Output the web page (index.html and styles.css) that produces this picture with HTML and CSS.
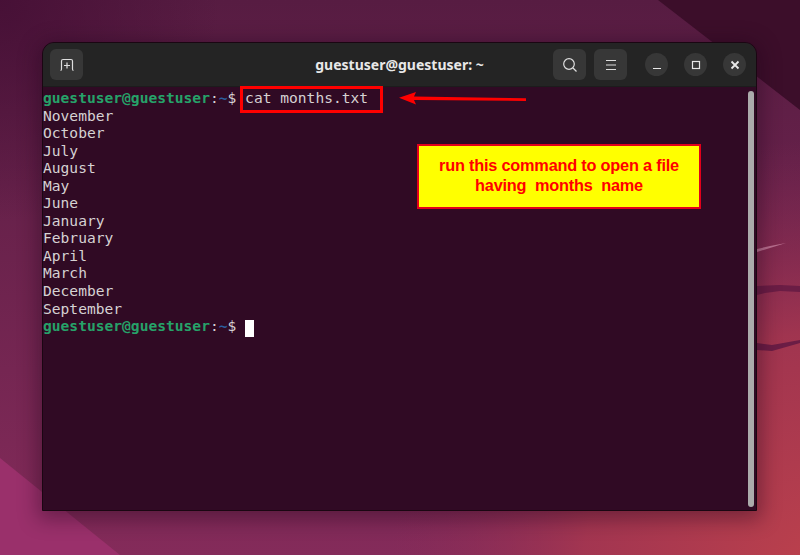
FILE: index.html
```html
<!DOCTYPE html>
<html lang="en">
<head>
<meta charset="utf-8">
<title>guestuser@guestuser: ~</title>
<link rel="stylesheet" href="styles.css">
</head>
<body>
<div class="desktop">
  <svg class="wallpaper" viewBox="0 0 800 555" preserveAspectRatio="none" aria-hidden="true">
    <defs>
      <linearGradient id="wall" x1="0" y1="0" x2="0" y2="1">
        <stop offset="0" stop-color="#571c42"/>
        <stop offset="1" stop-color="#842b5a"/>
      </linearGradient>
      <radialGradient id="red" gradientUnits="userSpaceOnUse" cx="820" cy="570" r="430">
        <stop offset="0" stop-color="#bc414c"/>
        <stop offset="0.55" stop-color="#a8374f" stop-opacity=".85"/>
        <stop offset="1" stop-color="#8a2c55" stop-opacity="0"/>
      </radialGradient>
      <radialGradient id="corner" gradientUnits="userSpaceOnUse" cx="0" cy="0" r="220">
        <stop offset="0" stop-color="#450f35" stop-opacity=".9"/>
        <stop offset="1" stop-color="#450f35" stop-opacity="0"/>
      </radialGradient>
    </defs>
    <rect width="800" height="555" fill="url(#wall)"/>
    <rect width="800" height="555" fill="url(#red)"/>
    <rect width="800" height="555" fill="url(#corner)"/>
    <polygon points="658,0 800,0 800,110" fill="#3c0e2a"/>
    <polygon points="0,458 120,555 0,555" fill="#9a306b"/>
    <path d="M757 252 L786 243 L770 246 L757 249 Z" fill="#b9708f"/>
    <path d="M757 286 L780 285 L800 286 L800 292 L780 291 L765 293 L757 295 Z" fill="#6b1d45"/>
    <path d="M757 343 L772 345 L800 340 L800 343 L772 351 L757 350 Z" fill="#6b1d45"/>
  </svg>
  <div class="window">
    <header class="titlebar">
      <div class="bar-left">
        <button class="tool-btn" type="button" aria-label="New tab">
          <svg class="icon" viewBox="0 0 16 16"><path d="M1.500 13.500 C2.500 13.500 2.500 13 2.500 12 V4 C2.500 2.800 3 2.500 4 2.500 H12 C13 2.500 13.500 2.800 13.500 4 V12 C13.500 13 13.500 13.500 14.500 13.500 M8 5.500 V11.500 M5 8.500 H11"/></svg>
        </button>
      </div>
      <h1 class="title">guestuser@guestuser: ~</h1>
      <div class="bar-right">
        <button class="tool-btn" type="button" aria-label="Search">
          <svg class="icon" viewBox="0 0 16 16"><circle cx="7" cy="7" r="5.300"/><path d="M11 11 L14.500 14.500"/></svg>
        </button>
        <button class="tool-btn" type="button" aria-label="Menu">
          <svg class="icon" viewBox="0 0 16 16"><path d="M3 3.500 H13 M3 8 H13 M3 12.500 H13"/></svg>
        </button>
        <div class="win-controls">
          <button class="win-btn" type="button" aria-label="Minimize"><svg class="icon-small" viewBox="0 0 12 12"><path d="M2 9.500 H10"/></svg></button>
          <button class="win-btn" type="button" aria-label="Maximize"><svg class="icon-small" viewBox="0 0 12 12"><rect x="2.500" y="2.500" width="7" height="7"/></svg></button>
          <button class="win-btn" type="button" aria-label="Close"><svg class="icon-small bold" viewBox="0 0 12 12"><path d="M2.500 2.500 L9.500 9.500 M9.500 2.500 L2.500 9.500"/></svg></button>
        </div>
      </div>
    </header>
    <main class="terminal">
      <pre class="output"><span class="user">guestuser@guestuser</span>:<span class="path">~</span>$ cat months.txt
November
October
July
August
May
June
January
February
April
March
December
September
<span class="user">guestuser@guestuser</span>:<span class="path">~</span>$ <span class="cursor"> </span></pre>
      <div class="scrollbar"></div>
    </main>
  </div>
  <div class="cmd-highlight"></div>
  <svg class="arrow" viewBox="0 0 128 13" aria-hidden="true"><path d="M0 5.700 L17 0 L15 4.500 L127 6.300 L127 9 L15 8 L17 12.500 Z"/></svg>
  <div class="callout">run this command to open a file<br>having&nbsp; months&nbsp; name</div>
</div>
</body>
</html>
```
FILE: styles.css
```css
* { box-sizing: border-box; }
html, body { margin: 0; padding: 0; }
body { width: 800px; height: 555px; overflow: hidden; background: #571c42; }
.desktop {
  position: relative;
  width: 800px;
  height: 555px;
  padding: 42px 43px 44px 42px;
  overflow: hidden;
}
.wallpaper { position: absolute; left: 0; top: 0; width: 800px; height: 555px; }
.window {
  position: relative;
  display: flex;
  flex-direction: column;
  height: 469px;
  border: 1px solid #1a0612;
  border-radius: 12px 12px 0 0;
  overflow: hidden;
  box-shadow: 0 4px 20px 4px rgba(30, 5, 25, .4);
  background: #300a24;
}
.titlebar {
  display: grid;
  grid-template-columns: 1fr auto 1fr;
  align-items: center;
  flex: none;
  height: 44px;
  padding: 0 10px 0 7px;
  background: #242424;
  border-bottom: 1px solid #1c1c1c;
}
.bar-left { display: flex; }
.bar-right { display: flex; justify-content: flex-end; align-items: center; gap: 8px; }
.title {
  margin: 0;
  padding-left: 3px;
  text-align: center;
  font: 700 14px/1 "Noto Sans", sans-serif;
  color: #e8e8e8;
}
button { padding: 0; border: 0; display: flex; align-items: center; justify-content: center; }
.tool-btn {
  width: 33px;
  height: 31px;
  border-radius: 6px;
  background: #373737;
}
.icon { width: 16px; height: 16px; fill: none; stroke: #dedede; stroke-width: 1.2; }
.win-controls { display: flex; gap: 16px; margin-left: 10px; }
.win-btn { width: 23px; height: 23px; border-radius: 50%; background: #373737; }
.icon-small { width: 12px; height: 12px; fill: none; stroke: #e8e8e8; stroke-width: 1.2; }
.icon-small.bold { stroke-width: 1.8; }
.terminal {
  display: flex;
  flex: 1;
  min-height: 0;
  padding: 2px 2px 3px 0;
  background: #300a24;
}
.output {
  flex: 1;
  margin: 0;
  font: 14.6px/17.55px "DejaVu Sans Mono", monospace;
  color: #d6d2d3;
  white-space: pre;
}
.user { color: #26a269; font-weight: 700; }
.path { color: #2a5f9e; font-weight: 700; }
.cursor { display: inline-block; width: 9px; height: 17px; background: #fff; vertical-align: -3px; }
.scrollbar { flex: none; width: 6px; margin-top: 2px; border-radius: 3px; background: #ababab; }
.cmd-highlight {
  position: absolute;
  left: 240px;
  top: 86px;
  width: 143px;
  height: 27px;
  border: 3px solid #f00;
}
.arrow {
  position: absolute;
  left: 399px;
  top: 92px;
  width: 128px;
  height: 13px;
  fill: #f00;
}
.callout {
  position: absolute;
  left: 417px;
  top: 144px;
  width: 284px;
  height: 65px;
  padding-top: 9px;
  border: 2px solid #e3001b;
  background: #ff0;
  color: #f00;
  font: 700 16.300px/20px "Liberation Sans", sans-serif;
  letter-spacing: -.2px;
  text-align: center;
}
```
